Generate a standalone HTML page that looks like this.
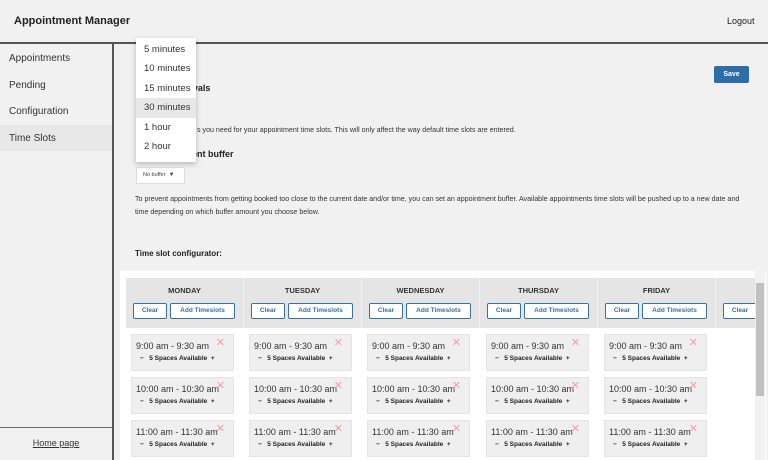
<!DOCTYPE html>
<html><head><style>
*{box-sizing:border-box;margin:0;padding:0}
body{width:768px;height:460px;overflow:hidden;background:#f1f1f1;font-family:"Liberation Sans",Arial,sans-serif;color:#222;position:relative}
.a{position:absolute}
.hdr{left:0;top:0;width:768px;height:44px;border-bottom:2px solid #555;background:#f1f1f1}
.side{left:0;top:44px;width:114px;height:416px;border-right:2px solid #555}
.side div{height:26.5px;padding-left:9px;font-size:10px;line-height:28px;color:#333}
.dd{left:136px;top:38px;width:60px;height:124px;background:#fff;box-shadow:0 2px 5px rgba(0,0,0,.25);font-size:9.5px;color:#333;padding-top:2px}
.dd div{height:19.4px;line-height:19.4px;padding-left:8px}
.small{font-size:7.1px;color:#333;white-space:nowrap}
.box{left:120px;top:271px;width:646px;height:189px;background:#fff}
.gh{left:126px;top:278px;width:630px;height:50px;background:#e5e5e5}
.col{position:absolute;top:278px;width:118px;height:50px;border-right:1px solid #f3f3f3}
.col b{display:block;text-align:center;font-size:7.5px;color:#333;margin-top:8px}
.btn{position:absolute;top:25px;height:16px;border:1.5px solid #3a6f9e;background:#fff;color:#3a6f9e;font-size:6.5px;font-weight:bold;text-align:center;line-height:13px;border-radius:2px}
.card{position:absolute;width:103px;height:37px;background:#efefef;border:1px solid #e4e4e4}
.card .t{position:absolute;left:4px;top:6px;font-size:9px;color:#333}
.card .x{position:absolute;right:8px;top:1px;color:#f2a0a0;font-size:11px}
.card .s{position:absolute;left:8px;top:20px;font-size:6.5px;font-weight:bold;color:#222}
</style></head><body>
<div class="a hdr"><div class="a" style="left:14px;top:15px;font-size:11px;font-weight:bold">Appointment Manager</div><div class="a" style="left:727px;top:16px;font-size:9px">Logout</div></div>
<div class="a side"><div style="margin-top:1px">Appointments</div><div>Pending</div><div>Configuration</div><div style="background:#e8e8e8">Time Slots</div>
<div class="a" style="left:0;top:383px;width:112px;height:33px;border-top:1.5px solid #666;text-align:center;font-size:9px;line-height:30px;padding:0"><span style="text-decoration:underline;color:#333">Home page</span></div></div>
<div class="a" style="left:714px;top:66px;width:35px;height:17px;background:#2d6ea8;border-radius:2px;color:#fff;font-size:7px;font-weight:bold;text-align:center;line-height:17px">Save</div>
<div class="a" style="left:150px;top:83px;font-size:9px;font-weight:bold">Time Intervals</div>
<div class="a small" style="left:197px;top:126px">s you need for your appointment time slots. This will only affect the way default time slots are entered.</div>
<div class="a" style="left:150px;top:149px;font-size:9px;font-weight:bold">Appointment buffer</div>
<div class="a" style="left:136px;top:167px;width:49px;height:17px;background:#fff;border:1px solid #ddd;font-size:5.5px;line-height:15px;padding-left:6px;color:#444">No buffer &nbsp;<span style="font-size:6px">▼</span></div>
<div class="a small" style="left:135px;top:193px;line-height:13px">To prevent appointments from getting booked too close to the current date and/or time, you can set an appointment buffer. Available appointments time slots will be pushed up to a new date and<br>time depending on which buffer amount you choose below.</div>
<div class="a" style="left:135px;top:249px;font-size:8px;font-weight:bold">Time slot configurator:</div>
<div class="a box"></div>
<div class="a gh"></div>
<div class="col" style="left:126px"><b>MONDAY</b><div class="btn" style="left:7px;width:34px">Clear</div><div class="btn" style="left:44px;width:65px">Add Timeslots</div></div>
<div class="col" style="left:244px"><b>TUESDAY</b><div class="btn" style="left:7px;width:34px">Clear</div><div class="btn" style="left:44px;width:65px">Add Timeslots</div></div>
<div class="col" style="left:362px"><b>WEDNESDAY</b><div class="btn" style="left:7px;width:34px">Clear</div><div class="btn" style="left:44px;width:65px">Add Timeslots</div></div>
<div class="col" style="left:480px"><b>THURSDAY</b><div class="btn" style="left:7px;width:34px">Clear</div><div class="btn" style="left:44px;width:65px">Add Timeslots</div></div>
<div class="col" style="left:598px"><b>FRIDAY</b><div class="btn" style="left:7px;width:34px">Clear</div><div class="btn" style="left:44px;width:65px">Add Timeslots</div></div>
<div class="col" style="left:716px;width:39px;overflow:hidden;border:none"><div class="btn" style="left:7px;width:34px">Clear</div></div>
<div class="a" style="left:755px;top:271px;width:10px;height:189px;background:#f1f1f1"></div>
<div class="a" style="left:756px;top:283px;width:8px;height:113px;background:#c1c1c1"></div>
<div id="cards"></div>
<div class="a dd"><div>5 minutes</div><div>10 minutes</div><div>15 minutes</div><div style="background:#e8e8e8">30 minutes</div><div>1 hour</div><div>2 hour</div></div>
<script>
var xs=[131,249,367,486,604],ys=[334,377,420],ts=["9:00 am - 9:30 am","10:00 am - 10:30 am","11:00 am - 11:30 am"],h="";
xs.forEach(function(x){ys.forEach(function(y,i){h+='<div class="card" style="left:'+x+'px;top:'+y+'px"><div class="t">'+ts[i]+'</div><div class="x">✕</div><div class="s">−&nbsp;&nbsp; 5 Spaces Available &nbsp;+</div></div>'})});
document.getElementById('cards').innerHTML=h;
</script>
</body></html>
